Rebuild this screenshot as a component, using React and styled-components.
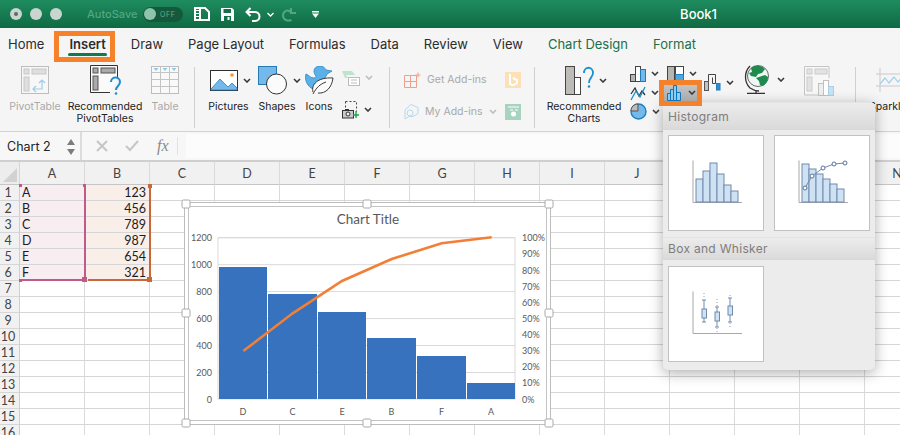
import React from 'react'
import styled, { createGlobalStyle } from 'styled-components'

const GlobalStyle = createGlobalStyle`
  html, body { margin: 0; padding: 0; background: #fff; }
  body { font-family: Inter, "Liberation Sans", sans-serif; }
`

const ORANGE = '#f5822a'

const Page = styled.div`
  position: relative;
  width: 900px;
  height: 435px;
  overflow: hidden;
  display: flex;
  flex-direction: column;
`

// Title bar
const TitleBar = styled.div`
  height: 28px;
  flex: none;
  display: flex;
  align-items: center;
  padding-left: 10px;
  background: linear-gradient(#1f8c60, #0f6a42);
`
const Light = styled.span`
  width: 12px;
  height: 12px;
  margin-right: 8px;
  border-radius: 50%;
  background: #c9d6d0;
  display: flex;
  align-items: center;
  justify-content: center;
  &::after {
    content: '';
    width: 4px;
    height: 4px;
    border-radius: 50%;
    background: ${({ $dot }) => ($dot ? '#5f6b66' : 'transparent')};
  }
`
const AutoSave = styled.span`
  flex: none;
  width: 50px;
  margin-left: 17px;
  font-size: 11px;
  font-weight: 500;
  white-space: nowrap;
  color: #4fa883;
`
const Toggle = styled.span`
  flex: none;
  margin-left: 6px;
  width: 40px;
  height: 15px;
  border-radius: 8px;
  background: #15593c;
  display: flex;
  align-items: center;
  gap: 4px;
  font-size: 7px;
  letter-spacing: 0.6px;
  color: #6aae90;
  &::before {
    content: '';
    width: 12px;
    height: 12px;
    margin-left: 1px;
    border-radius: 50%;
    background: #8dc4ac;
  }
`
const QuickIcon = styled.svg`
  flex: none;
  margin-left: ${({ $gap }) => $gap}px;
`
const DocTitle = styled.span`
  margin-left: auto;
  margin-right: 183px;
  font-size: 13px;
  font-weight: 500;
  color: #fff;
`

// Tabs
const TabRow = styled.div`
  height: 32px;
  flex: none;
  display: flex;
  align-items: center;
  gap: 25px;
  padding-left: 8px;
  box-sizing: border-box;
  background: #f5f5f5;
`
const Tab = styled.span`
  position: relative;
  font-size: 13px;
  font-weight: ${({ $marked }) => ($marked ? 600 : 400)};
  color: ${({ $chart }) => ($chart ? '#1b7048' : '#2c2c2c')};
  ${({ $marked }) =>
    $marked &&
    `
    &::before {
      content: '';
      position: absolute;
      left: -1px; right: -1px; top: 17px;
      height: 2.5px;
      border-radius: 2px;
      background: #117a4c;
    }
    &::after {
      content: '';
      position: absolute;
      left: -15px; right: -9px; top: -5px; bottom: -10px;
      border: 5px solid ${ORANGE};
    }
  `}
`

// Ribbon
const Ribbon = styled.div`
  height: 72px;
  flex: none;
  display: flex;
  background: #f5f5f5;
  border-bottom: 1px solid #d2d2d2;
  box-sizing: border-box;
`
const Group = styled.div`
  position: relative;
  flex: none;
  width: ${({ $w }) => $w}px;
  padding-left: ${({ $pad }) => $pad || 0}px;
  box-sizing: border-box;
  display: flex;
  &::after {
    content: '';
    position: absolute;
    right: 0;
    top: 7px;
    bottom: 3px;
    width: 1px;
    background: #d0d0d0;
  }
`
const Tall = styled.div`
  flex: none;
  width: ${({ $w }) => $w}px;
  display: flex;
  flex-direction: column;
  align-items: center;
`
const TallIcon = styled.div`
  height: 28px;
  margin-top: 6px;
  margin-left: ${({ $ml }) => $ml || 0}px;
  display: flex;
  align-items: center;
  gap: 5px;
`
const Label = styled.div`
  margin-top: 7px;
  font-size: 10.5px;
  line-height: 12px;
  text-align: center;
  white-space: nowrap;
  color: ${({ $off }) => ($off ? '#a9a9a9' : '#222')};
`
const SparkSlot = styled.div`
  flex: none;
  padding-left: 13px;
  display: flex;
  flex-direction: column;
  align-items: flex-start;
`
const Chev = ({ off }) => (
  <svg width="8" height="5" viewBox="0 0 8 5" style={{ flex: 'none' }}>
    <path d="M1 1l3 3 3-3" fill="none" stroke={off ? '#bcbcbc' : '#3a3a3a'} strokeWidth="1.6" />
  </svg>
)
const Stack = styled.div`
  flex: none;
  margin-left: ${({ $ml }) => $ml || 0}px;
  padding-top: ${({ $top }) => $top}px;
  display: flex;
  flex-direction: column;
  gap: ${({ $gap }) => $gap}px;
`
const Small = styled.div`
  display: flex;
  align-items: center;
  gap: ${({ $gap }) => $gap || 5}px;
  height: ${({ $h }) => $h || 17}px;
`
const Marked = styled(Small)`
  position: relative;
  z-index: 1;
  &::before {
    content: '';
    position: absolute;
    left: -8px; right: -5px; top: -4px; bottom: -5px;
    border: 5px solid ${ORANGE};
    background: linear-gradient(#c4c4c4, #a9a9a9);
    z-index: -1;
  }
`
const AddRows = styled.div`
  flex: 1;
  display: flex;
  flex-direction: column;
  gap: 15px;
  padding: 11px 14px 0 14px;
`
const AddRow = styled.div`
  display: flex;
  align-items: center;
  height: 17px;
  font-size: 10.5px;
  color: #a9a9a9;
  gap: 6px;
`
const AddBox = styled.span`
  margin-left: auto;
  width: 16px;
  height: 16px;
  display: flex;
  align-items: center;
  justify-content: center;
  background: ${({ $bg }) => $bg};
`

// Formula bar
const FormulaBar = styled.div`
  height: 30px;
  flex: none;
  display: flex;
  align-items: center;
  background: #f7f7f7;
  border-bottom: 2px solid #cfcfcf;
  box-sizing: border-box;
`
const NameBox = styled.div`
  width: 82px;
  height: 100%;
  flex: none;
  padding: 1px 5px 0 7px;
  box-sizing: border-box;
  display: flex;
  align-items: center;
  justify-content: space-between;
  font-size: 12.5px;
  color: #222;
  border-right: 2px solid #dcdcdc;
`
const Arrows = styled.span`
  display: flex;
  flex-direction: column;
  gap: 4px;
  &::before, &::after {
    content: '';
    border-left: 4px solid transparent;
    border-right: 4px solid transparent;
  }
  &::before { border-bottom: 6px solid #7c7c7c; }
  &::after { border-top: 6px solid #7c7c7c; }
`
const Fx = styled.span`
  margin-left: 18px;
  font-family: "Liberation Serif", serif;
  font-style: italic;
  font-size: 16px;
  color: #8a8a8a;
  padding-right: 8px;
  border-right: 1px solid #e2e2e2;
`
const FormulaInput = styled.div`
  flex: 1;
  height: 24px;
  margin-left: 8px;
  background: #fcfcfc;
`

// Sheet
const Sheet = styled.div`
  flex: 1;
  display: grid;
  grid-template-columns: 20px repeat(14, 65px);
  grid-template-rows: 23px repeat(16, 16px);
  font-family: Lato, "Liberation Sans", sans-serif;
  font-size: 12.5px;
  color: #1c1c1c;
  background: #fff;
`
const Corner = styled.div`
  position: relative;
  background: #ededed;
  border-right: 1px solid #d6d6d6;
  border-bottom: 1px solid #c6c6c6;
  &::after {
    content: '';
    position: absolute;
    right: 2px;
    bottom: 2px;
    border-left: 14px solid transparent;
    border-bottom: 14px solid #d2d2d2;
  }
`
const ColHead = styled.div`
  display: flex;
  align-items: center;
  justify-content: center;
  background: #f1f1f1;
  color: #444;
  border-right: 1px solid #dadada;
  border-bottom: 1px solid #c6c6c6;
`
const RowHead = styled.div`
  display: flex;
  align-items: center;
  justify-content: center;
  background: #f1f1f1;
  color: #444;
  border-right: 1px solid #cecece;
  border-bottom: 1px solid #d6d6d6;
  padding-right: 3px;
`
const Cell = styled.div`
  padding: 0 3px 0 2px;
  line-height: 15px;
  text-align: ${({ $num }) => ($num ? 'right' : 'left')};
  background: ${({ $tint }) => $tint || '#fff'};
  border-right: 1px solid #dbdbdb;
  border-bottom: 1px solid #d6d6d6;
`

// Range marks over the sheet
const RangeMark = styled.div`
  position: absolute;
  left: ${({ $x }) => $x}px;
  top: 184px;
  width: ${({ $w }) => $w}px;
  height: 97px;
  border-right: 2px solid ${({ $c }) => $c};
  border-bottom: 2px solid ${({ $c }) => $c};
  box-sizing: border-box;
`
const Pin = styled.span`
  position: absolute;
  width: ${({ $s }) => $s}px;
  height: ${({ $s }) => $s}px;
  background: ${({ $c }) => $c};
  ${({ $l }) => ($l ? 'left: -1px;' : 'right: -3px;')}
  ${({ $t }) => ($t ? 'top: 0;' : 'bottom: -3px;')}
`

// Chart
const ChartBox = styled.div`
  position: absolute;
  left: 184px;
  top: 202px;
  width: 367px;
  height: 223px;
  box-sizing: border-box;
  background: #fff;
  border: 1px solid #bdbdbd;
  padding: 3px;
`
const ChartInner = styled.div`
  width: 100%;
  height: 100%;
  box-sizing: border-box;
  border: 1.5px solid #c4c4c4;
`
const Handle = styled.span`
  position: absolute;
  width: 7px;
  height: 7px;
  transform: translate(-50%, -50%);
  left: ${({ $x }) => $x}px;
  top: ${({ $y }) => $y}px;
  background: #fff;
  border: 1px solid #a8a8a8;
  border-radius: 2px;
`
const ChartSvg = styled.svg`
  position: absolute;
  left: 0;
  top: 0;
  font-family: Lato, "Liberation Sans", sans-serif;
`

// Dropdown gallery
const Gallery = styled.div`
  position: absolute;
  left: 663px;
  top: 102px;
  width: 212px;
  height: 268px;
  background: #ececec;
  border-radius: 5px;
  box-shadow: 0 3px 14px rgba(0, 0, 0, 0.32);
  overflow: hidden;
`
const GalleryHead = styled.div`
  height: ${({ $h }) => $h}px;
  padding-left: 5px;
  display: flex;
  align-items: center;
  font-size: 12px;
  letter-spacing: 0.3px;
  color: #7d7d7d;
  background: linear-gradient(#ececec, #dadada);
  border-bottom: 1px solid #d8d8d8;
  border-top: 1px solid #e4e4e4;
  box-sizing: border-box;
`
const GalleryRow = styled.div`
  display: flex;
  gap: 10px;
  padding: ${({ $pad }) => $pad};
`
const Thumb = styled.div`
  width: 96px;
  height: 96px;
  box-sizing: border-box;
  background: #fff;
  border: 1px solid #c2c2c2;
`

// Icons
const PivotIcon = () => (
  <svg width="28" height="28" viewBox="0 0 28 28">
    <rect x=".5" y=".5" width="27" height="27" fill="#f7f7f7" stroke="#bdbdbd" />
    <rect x="3" y="3" width="5" height="5" fill="#dedede" stroke="#c8c8c8" />
    <rect x="11" y="3" width="14" height="5" fill="#dedede" stroke="#c8c8c8" />
    <rect x="3" y="11" width="5" height="14" fill="#dedede" stroke="#c8c8c8" />
    <path d="M12 23h9v-9M18 17l3-3 3 3M15 20l-3 3 3 3" fill="none" stroke="#9ccde8" strokeWidth="1.2" />
  </svg>
)
const RecPivotIcon = () => (
  <svg width="31" height="30" viewBox="0 0 31 30">
    <path d="M20 27.5H.5V.5h27V14" fill="#fafafa" stroke="#333" />
    <rect x="3" y="3" width="5" height="5" fill="#aaa" stroke="#555" />
    <rect x="11" y="3" width="14" height="5" fill="#aaa" stroke="#555" />
    <rect x="3" y="11" width="5" height="14" fill="#aaa" stroke="#555" />
    <path d="M21 17c0-6 9-6 9 0 0 4-4 4-4 8" fill="none" stroke="#1c8fd1" strokeWidth="2" />
    <circle cx="26" cy="28.5" r="1.3" fill="#1c8fd1" />
  </svg>
)
const TableIcon = () => (
  <svg width="28" height="28" viewBox="0 0 28 28">
    <rect x=".5" y=".5" width="27" height="27" fill="#f9f9f9" stroke="#bdbdbd" />
    <path d="M.5 6.5h27M.5 13.5h27M.5 20.5h27M9.5.5v27M18.5.5v27" stroke="#c4c4c4" fill="none" />
    <path d="M2.5 2h5l-2.5 3zM11.5 2h5l-2.5 3zM20.5 2h5l-2.5 3z" fill="#90c8ea" />
  </svg>
)
const PictureIcon = () => (
  <svg width="28" height="21" viewBox="0 0 28 21">
    <rect x=".5" y=".5" width="27" height="20" fill="#fff" stroke="#2f2f2f" />
    <path d="M1 19l9-10 8 8 4-4 5 5v2H1z" fill="#74b9ea" stroke="#2c7fb8" strokeWidth=".8" />
    <circle cx="22" cy="5" r="1.8" fill="#f5953c" />
  </svg>
)
const ShapesIcon = () => (
  <svg width="30" height="29" viewBox="0 0 30 29">
    <rect x=".5" y=".5" width="18" height="18" fill="#74b9ea" stroke="#2179b5" />
    <circle cx="18.5" cy="18" r="10" fill="#fbfbfb" stroke="#333" />
  </svg>
)
const DuckIcon = () => (
  <svg width="29" height="29" viewBox="0 0 29 29">
    <path d="M1 8c3 1 4 4 8 4 1 0 2-1 2-2-1-1-2-3-2-5 0-3 3-5 6-5 3 0 5 2 6 4l6 1-5 3c-1 3-4 6-4 9 0 5-6 7-10 6C3 21-1 14 1 8z" fill="#5cb0e8" stroke="#2a85c4" strokeWidth=".8" />
    <path d="M8 26c-2-7 4-15 20-14-1 9-7 16-15 15" fill="#fbfbfb" stroke="#3a3a3a" strokeWidth="1" />
    <path d="M8 28c3-6 7-10 13-12" fill="none" stroke="#3a3a3a" strokeWidth="1" />
  </svg>
)
const SmartArtIcon = () => (
  <svg width="18" height="16" viewBox="0 0 18 16">
    <path d="M0 1h10l3 4H4l2 3H3z" fill="#bfe3cd" />
    <rect x="6.5" y="7.5" width="11" height="8" fill="#fff" stroke="#bdbdbd" />
    <path d="M9 10h6M9 13h6" stroke="#bdbdbd" />
  </svg>
)
const ShotIcon = () => (
  <svg width="17" height="18" viewBox="0 0 17 18">
    <rect x="3.5" y=".5" width="11" height="10" fill="none" stroke="#444" strokeDasharray="2 2" />
    <rect x=".5" y="9.5" width="11" height="7.5" fill="#c9c9c9" stroke="#333" />
    <rect x="3" y="8" width="4" height="2" fill="#333" />
    <circle cx="6" cy="13" r="2" fill="#f2f2f2" stroke="#333" />
    <path d="M14 11v6M11 14h6" stroke="#17a349" strokeWidth="1.4" />
  </svg>
)
const GetAddIcon = () => (
  <svg width="17" height="16" viewBox="0 0 17 16">
    <path d="M.5 3.5h6v6h-6zM.5 9.5h6v6h-6zM6.5 9.5h6v6h-6zM6.5 3.5h6v6" fill="none" stroke="#efa08c" />
    <path d="M14 .5v5M11.5 3h5" stroke="#efa08c" />
  </svg>
)
const MyAddIcon = () => (
  <svg width="15" height="16" viewBox="0 0 15 16">
    <path d="M7 .5l7 3v6l-5 3H5L1 15V6z" fill="none" stroke="#b9d9ec" />
    <circle cx="6" cy="9" r="3" fill="none" stroke="#b9d9ec" />
  </svg>
)
const RecChartIcon = () => (
  <svg width="29" height="29" viewBox="0 0 29 29">
    <rect x=".5" y=".5" width="9" height="28" fill="#bdbcb8" stroke="#444" />
    <rect x="9.5" y="11.5" width="6" height="17" fill="#fff" stroke="#444" />
    <path d="M19 7c0-7 9-7 9 0 0 4-4 5-4 10" fill="none" stroke="#1c8fd1" strokeWidth="1.8" />
    <circle cx="24" cy="20.5" r="1.3" fill="#1c8fd1" />
  </svg>
)
const ColumnIcon = () => (
  <svg width="16" height="16" viewBox="0 0 16 16">
    <rect x=".5" y="8.5" width="5" height="7" fill="#b5b5b1" stroke="#444" />
    <rect x="5.5" y=".5" width="5" height="15" fill="#fff" stroke="#444" />
    <rect x="10.500" y="3.500" width="5" height="12" fill="#74b9ea" stroke="#2179b5" />
  </svg>
)
const LineIcon = () => (
  <svg width="16" height="16" viewBox="0 0 16 16">
    <path d="M1 9L5 3l4 8 3-5 3 4" fill="none" stroke="#333" strokeWidth="1.3" />
    <path d="M1 15L6 6l4 6 5-10" fill="none" stroke="#1c8fd1" strokeWidth="1.3" />
  </svg>
)
const PieIcon = () => (
  <svg width="17" height="17" viewBox="0 0 17 17">
    <circle cx="8.5" cy="8.5" r="7.5" fill="#74b9ea" stroke="#1f7fc0" strokeWidth="1.4" />
    <path d="M8 8V1C4 1 1 4 1 8z" fill="#bdbcb8" stroke="#555" />
  </svg>
)
const StackIcon = () => (
  <svg width="17" height="16" viewBox="0 0 17 16">
    <rect x=".5" y=".5" width="7" height="15" fill="#b5b5b1" stroke="#444" />
    <rect x="8.5" y=".5" width="8" height="8" fill="#fff" stroke="#444" />
    <rect x="8.5" y="8.5" width="8" height="7" fill="#4fa6e0" stroke="#1f7fc0" />
  </svg>
)
const HistIcon = () => (
  <svg width="14" height="16" viewBox="0 0 14 16">
    <path d="M.5 15.5V8.5h3v7zM3.5 15.5V4.5h3v11zM6.5 15.5V.5h3v15zM9.5 15.5V7.5h4v8z" fill="#8ccbf2" stroke="#0f74ba" />
  </svg>
)
const WaterfallIcon = () => (
  <svg width="17" height="17" viewBox="0 0 17 17">
    <rect x=".5" y="7.5" width="4" height="9" fill="#c2c2c2" stroke="#555" />
    <path d="M4.5 7.5V.5h7v9h-3V3.500" fill="#f5f5f5" stroke="#444" />
    <rect x="12.500" y="9.500" width="3.500" height="6.500" fill="#2d8fd3" stroke="#1f7fc0" />
  </svg>
)
const GlobeIcon = () => (
  <svg width="25" height="29" viewBox="0 0 25 29">
    <circle cx="14" cy="11" r="10.5" fill="#eef7f4" stroke="#444" strokeWidth=".8" />
    <path d="M7 3c4-3 10-3 14 1l-3 4-4 1-2 3-5-1-2-3 3-1zM12 13l9-3 3 2c0 4-2 7-5 9l-3-1-1-4z" fill="#1e8a4c" />
    <path d="M6 1C0 7 0 17 6 23c3 2 6 3 9 3M3 28.500H21M12 26v2.500" fill="none" stroke="#333" strokeWidth="1.300" />
  </svg>
)
const PivotChartIcon = () => (
  <svg width="31" height="30" viewBox="0 0 31 30">
    <path d="M14 29H.5V.5H25V12" fill="#f7f7f7" stroke="#c6c6c6" />
    <rect x="3" y="3" width="5" height="5" fill="#e2e2e2" stroke="#cccccc" />
    <rect x="11" y="3" width="12" height="5" fill="#e2e2e2" stroke="#cccccc" />
    <rect x="3" y="11" width="5" height="14" fill="#e2e2e2" stroke="#cccccc" />
    <rect x="14.500" y="17.500" width="5" height="12" fill="#eee" stroke="#c0c0c0" />
    <rect x="19.500" y="14.500" width="5" height="15" fill="#fff" stroke="#c0c0c0" />
    <rect x="24.500" y="20.500" width="5" height="9" fill="#c6e2f4" stroke="#a8cfe8" />
  </svg>
)
const SparkIcon = () => (
  <svg width="28" height="24" viewBox="0 0 28 24">
    <path d="M4 0v24M0 18h28M0 6h28" stroke="#c9c9c9" fill="none" />
    <path d="M4 16l5-6 4 5 5-6 4 5 5-6" stroke="#9fd2ec" fill="none" strokeWidth="1.2" />
  </svg>
)

const BAR = { fill: '#cfe2f3', stroke: '#7089ad' }
const AXIS = 'M25 25.5V67.5H74'

const HistThumb = () => (
  <svg width="94" height="94" viewBox="1 1 94 94">
    <path d={AXIS} fill="none" stroke="#a8a8a8" />
    {[44, 36, 28, 39, 50, 56].map((t, i) => (
      <rect key={i} x={28 + i * 7} y={t} width="7" height={67 - t} {...BAR} />
    ))}
  </svg>
)
const ParetoThumb = () => (
  <svg width="94" height="94" viewBox="1 1 94 94">
    <path d={AXIS} fill="none" stroke="#a8a8a8" />
    {[29, 34, 39, 44, 49, 54].map((t, i) => (
      <rect key={i} x={28 + i * 7} y={t} width="7" height={67 - t} {...BAR} />
    ))}
    <path d="M31 53L38 41L49 33L60 29L71 28" fill="none" stroke="#7089ad" />
    {[[31, 53], [38, 41], [49, 33], [60, 29], [71, 28]].map(([x, y]) => (
      <circle key={x} cx={x} cy={y} r="2" fill="#fff" stroke="#56739b" />
    ))}
  </svg>
)
const BoxThumb = () => (
  <svg width="94" height="94" viewBox="1 1 94 94">
    <path d={AXIS} fill="none" stroke="#a8a8a8" />
    {[
      { x: 36, d1: 'M36 27V33', w1: 34, w2: 56, b: 43, d2: '' },
      { x: 49, d1: 'M49 33V40', w1: 41, w2: 61, b: 46, d2: 'M49 62V66' },
      { x: 62, d1: 'M62 29V31', w1: 32, w2: 56, b: 40, d2: 'M62 57V62' }
    ].map((g) => (
      <g key={g.x}>
        <path d={g.d1} stroke="#8a9fbe" strokeDasharray="1 2" />
        {g.d2 && <path d={g.d2} stroke="#8a9fbe" strokeDasharray="1 2" />}
        <path d={`M${g.x} ${g.w1}V${g.w2}M${g.x - 2} ${g.w1}h4M${g.x - 2} ${g.w2}h4`} stroke="#7089ad" fill="none" />
        <rect x={g.x - 2} y={g.b} width="4.5" height="9" {...BAR} />
      </g>
    ))}
  </svg>
)

const GRID_Y = [237.7, 264.7, 291.6, 318.6, 345.5, 372.5]
const LEFT_AXIS = [1200, 1000, 800, 600, 400, 200, 0]
const RIGHT_AXIS = [238, 254, 271, 287, 303, 319, 335, 351, 367, 383, 400]
const BARS = [
  { x: 219, w: 48, top: 267, cat: 'D' },
  { x: 268, w: 49, top: 294, cat: 'C' },
  { x: 318, w: 48, top: 312, cat: 'E' },
  { x: 367, w: 49, top: 338, cat: 'B' },
  { x: 417, w: 49, top: 356, cat: 'F' },
  { x: 467, w: 48, top: 383, cat: 'A' }
]
const HANDLES = [
  [186, 204], [367, 204], [549, 204],
  [186, 313], [549, 313],
  [186, 423], [367, 423], [549, 423]
]

const ParetoChart = () => (
  <ChartSvg width="900" height="435" viewBox="0 0 900 435">
    <text x="368" y="224" textAnchor="middle" fontSize="13.5" fill="#595959">Chart Title</text>
    <rect x="218" y="237.7" width="297" height="161.3" fill="none" stroke="#d9d9d9" />
    {GRID_Y.map((y) => (
      <path key={y} d={`M218 ${y}H515`} stroke="#d9d9d9" />
    ))}
    {BARS.map((b) => (
      <rect key={b.cat} x={b.x} y={b.top} width={b.w} height={399 - b.top} fill="#3672bd" />
    ))}
    <path
      d="M243.3 351L292.7 313.3L342 281L391.7 259L441.7 243.3L491.7 237.3"
      fill="none"
      stroke="#f37f36"
      strokeWidth="2.6"
    />
    {LEFT_AXIS.map((v, i) => (
      <text key={v} x="212" y={241 + i * 26.95} textAnchor="end" fontSize="9" fill="#595959">{v}</text>
    ))}
    {RIGHT_AXIS.map((y, i) => (
      <text key={y} x="522" y={y + 3} fontSize="9" fill="#595959">{100 - i * 10}%</text>
    ))}
    {BARS.map((b) => (
      <text key={b.cat} x={b.x + b.w / 2} y="415" textAnchor="middle" fontSize="9" fill="#595959">{b.cat}</text>
    ))}
  </ChartSvg>
)

const COLS = 'ABCDEFGHIJKLMN'.split('')
const DATA = [['A', 123], ['B', 456], ['C', 789], ['D', 987], ['E', 654], ['F', 321]]
const PINK = '#f8edf1'
const PEACH = '#faeee8'

const App = () => (
  <Page>
    <GlobalStyle />
    <TitleBar>
      <Light $dot />
      <Light />
      <Light />
      <AutoSave>AutoSave</AutoSave>
      <Toggle>OFF</Toggle>
      <QuickIcon $gap={11} width="16" height="14" viewBox="0 0 16 14">
        <path d="M1 1h10l4 4v8H1zM6 1v12" fill="none" stroke="#fff" strokeWidth="2" />
        <path d="M2 3.500h3M2 6.500h3M2 9.500h3" stroke="#fff" />
      </QuickIcon>
      <QuickIcon $gap={10} width="15" height="15" viewBox="0 0 15 15">
        <path d="M1 1h11l2 2v11H1z" fill="#fff" />
        <rect x="3.5" y="2" width="7.5" height="4" fill="#137048" />
        <rect x="4" y="9" width="7" height="5" fill="#137048" />
        <rect x="7.5" y="10" width="2" height="3" fill="#fff" />
      </QuickIcon>
      <QuickIcon $gap={10} width="16" height="15" viewBox="0 0 16 15">
        <path d="M5.500 1L1.500 5l4 4M1.500 5H10c6 0 6 9 0 9H7" fill="none" stroke="#fff" strokeWidth="2" />
      </QuickIcon>
      <QuickIcon $gap={6} width="7" height="5" viewBox="0 0 7 5">
        <path d="M.5 1l3 3 3-3" fill="none" stroke="#fff" strokeWidth="1.3" />
      </QuickIcon>
      <QuickIcon $gap={8} width="15" height="15" viewBox="0 0 15 15">
        <path d="M9 1v5h5M9 5.500C6 1.500 1 4 1 8.500s5 6 8.500 4.500" fill="none" stroke="#4fa883" strokeWidth="2" />
      </QuickIcon>
      <QuickIcon $gap={15} width="7" height="7" viewBox="0 0 7 7">
        <path d="M0 0h7v1.500H0zM0 2.500h7L3.500 7z" fill="#fff" />
      </QuickIcon>
      <DocTitle>Book1</DocTitle>
    </TitleBar>

    <TabRow>
      <Tab>Home</Tab>
      <Tab $marked>Insert</Tab>
      <Tab>Draw</Tab>
      <Tab>Page Layout</Tab>
      <Tab>Formulas</Tab>
      <Tab>Data</Tab>
      <Tab>Review</Tab>
      <Tab>View</Tab>
      <Tab $chart>Chart Design</Tab>
      <Tab $chart>Format</Tab>
    </TabRow>

    <Ribbon>
      <Group $w={195}>
        <Tall $w={70}>
          <TallIcon><PivotIcon /></TallIcon>
          <Label $off>PivotTable</Label>
        </Tall>
        <Tall $w={70}>
          <TallIcon><RecPivotIcon /></TallIcon>
          <Label>Recommended<br />PivotTables</Label>
        </Tall>
        <Tall $w={50}>
          <TallIcon><TableIcon /></TallIcon>
          <Label $off>Table</Label>
        </Tall>
      </Group>
      <Group $w={195} $pad={10}>
        <Tall $w={47}>
          <TallIcon $ml={3}><PictureIcon /><Chev /></TallIcon>
          <Label>Pictures</Label>
        </Tall>
        <Tall $w={50}>
          <TallIcon $ml={4}><ShapesIcon /><Chev /></TallIcon>
          <Label>Shapes</Label>
        </Tall>
        <Tall $w={34}>
          <TallIcon><DuckIcon /></TallIcon>
          <Label>Icons</Label>
        </Tall>
        <Stack $ml={6} $top={9} $gap={15}>
          <Small><SmartArtIcon /><Chev off /></Small>
          <Small><ShotIcon /><Chev /></Small>
        </Stack>
      </Group>
      <Group $w={145}>
        <AddRows>
          <AddRow>
            <GetAddIcon />Get Add-ins
            <AddBox $bg="#fbe1b5">
              <svg width="9" height="12" viewBox="0 0 9 12"><path d="M1 0v10l3 1.500 4-2.500V6L4 4" fill="none" stroke="#fff" strokeWidth="2" /></svg>
            </AddBox>
          </AddRow>
          <AddRow>
            <MyAddIcon />My Add-ins <Chev off />
            <AddBox $bg="#a8d3c0">
              <svg width="11" height="12" viewBox="0 0 11 12"><path d="M0 1h11M2 4h3M7 4h3" stroke="#fff" /><circle cx="5.5" cy="8" r="2.5" fill="#fff" /></svg>
            </AddBox>
          </AddRow>
        </AddRows>
      </Group>
      <Group $w={321} $pad={12}>
        <Tall $w={74}>
          <TallIcon $ml={4}><RecChartIcon /><Chev /></TallIcon>
          <Label>Recommended<br />Charts</Label>
        </Tall>
        <Stack $ml={9} $top={5} $gap={2}>
          <Small><ColumnIcon /><Chev /></Small>
          <Small><LineIcon /><Chev /></Small>
          <Small><PieIcon /><Chev /></Small>
        </Stack>
        <Stack $ml={7} $top={5} $gap={2}>
          <Small><StackIcon /><Chev /></Small>
          <Marked $gap={7}><HistIcon /><Chev /></Marked>
        </Stack>
        <Stack $ml={7} $top={13} $gap={0}>
          <Small $h={18}><WaterfallIcon /><Chev /></Small>
        </Stack>
        <Stack $ml={10} $top={5} $gap={0}>
          <Small $h={29} $gap={8}><GlobeIcon /><Chev /></Small>
        </Stack>
        <Stack $ml={19} $top={6} $gap={0}>
          <PivotChartIcon />
        </Stack>
      </Group>
      <SparkSlot>
        <TallIcon $ml={7}><SparkIcon /></TallIcon>
        <Label>Sparklines</Label>
      </SparkSlot>
    </Ribbon>

    <FormulaBar>
      <NameBox>Chart 2<Arrows /></NameBox>
      <QuickIcon $gap={14} width="12" height="12" viewBox="0 0 12 12">
        <path d="M1 1l10 10M11 1L1 11" stroke="#c6c6c6" strokeWidth="2" />
      </QuickIcon>
      <QuickIcon $gap={17} width="14" height="12" viewBox="0 0 14 12">
        <path d="M1 6l4 4 8-9" fill="none" stroke="#c6c6c6" strokeWidth="2" />
      </QuickIcon>
      <Fx>fx</Fx>
      <FormulaInput />
    </FormulaBar>

    <Sheet>
      <Corner />
      {COLS.map((c) => <ColHead key={c}>{c}</ColHead>)}
      {Array.from({ length: 16 }, (_, r) => (
        <React.Fragment key={r}>
          <RowHead>{r + 1}</RowHead>
          {COLS.map((c, i) => {
            const row = DATA[r]
            if (row && i === 0) return <Cell key={c} $tint={PINK}>{row[0]}</Cell>
            if (row && i === 1) return <Cell key={c} $num $tint={PEACH}>{row[1]}</Cell>
            return <Cell key={c} />
          })}
        </React.Fragment>
      ))}
    </Sheet>

    <RangeMark $x={20} $w={66} $c="#c05a86">
      <Pin $s={3} $c="#c05a86" $l $t />
      <Pin $s={3} $c="#c05a86" $t style={{ right: -2 }} />
      <Pin $s={3} $c="#c05a86" $l />
      <Pin $s={5} $c="#c05a86" />
    </RangeMark>
    <RangeMark $x={88} $w={63} $c="#c8683a">
      <Pin $s={4} $c="#c8683a" $t />
      <Pin $s={5} $c="#c8683a" />
    </RangeMark>

    <ChartBox><ChartInner /></ChartBox>
    <ParetoChart />
    {HANDLES.map(([x, y]) => <Handle key={`${x}-${y}`} $x={x} $y={y} />)}

    <Gallery>
      <GalleryHead $h={28}>Histogram</GalleryHead>
      <GalleryRow $pad="5px 5px 6px">
        <Thumb><HistThumb /></Thumb>
        <Thumb><ParetoThumb /></Thumb>
      </GalleryRow>
      <GalleryHead $h={23}>Box and Whisker</GalleryHead>
      <GalleryRow $pad="6px 5px">
        <Thumb><BoxThumb /></Thumb>
      </GalleryRow>
    </Gallery>
  </Page>
)

export default App
